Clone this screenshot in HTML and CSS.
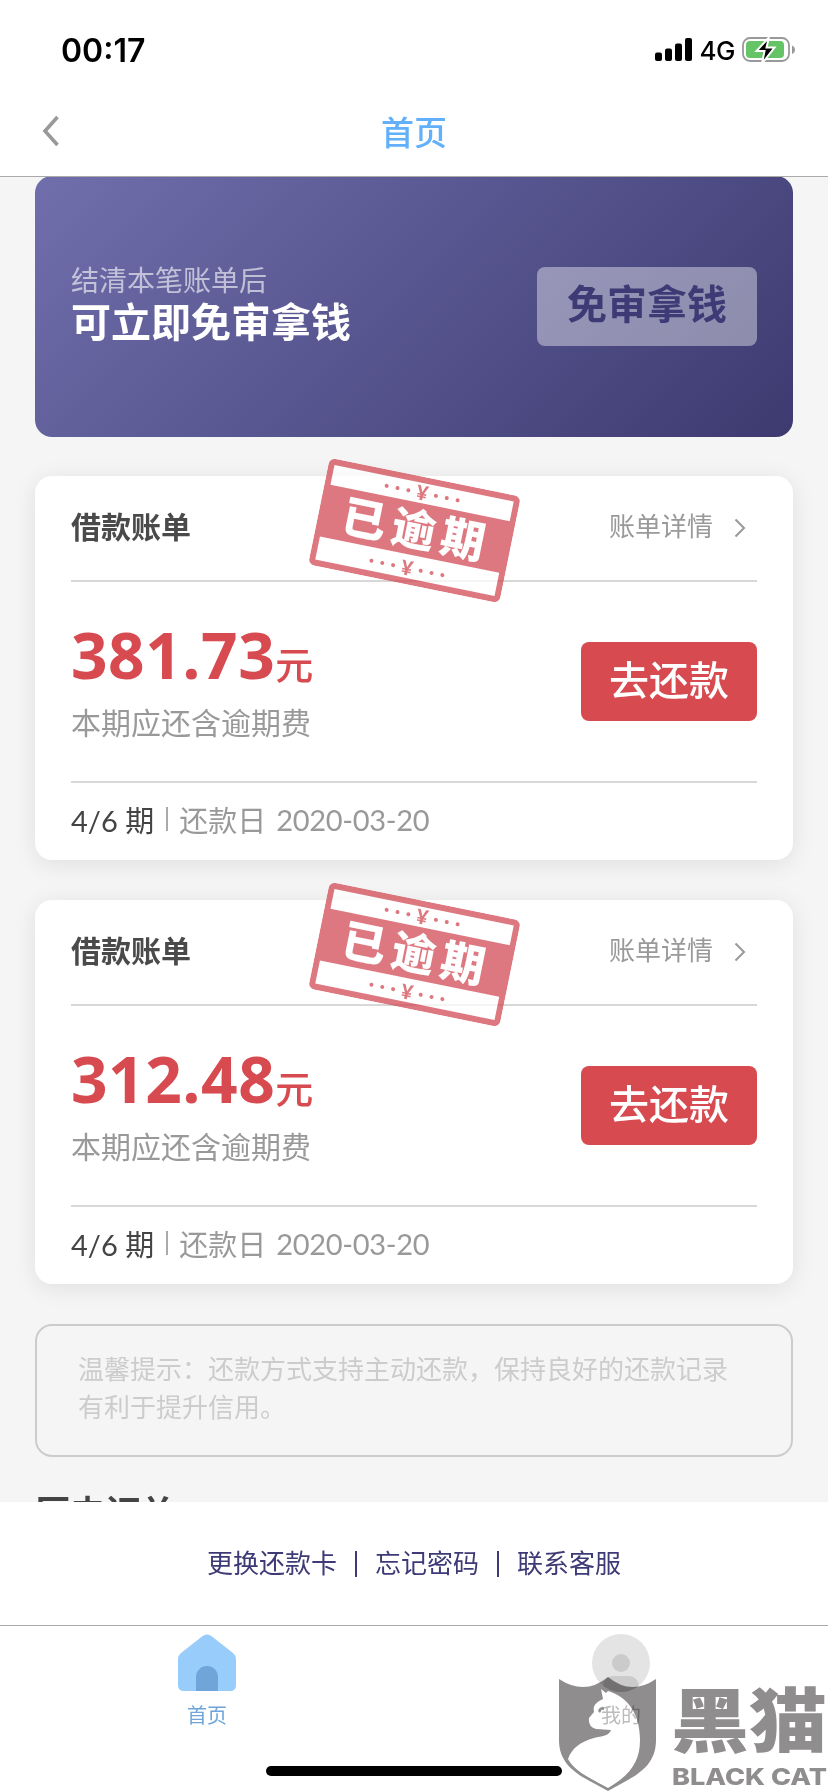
FILE: index.html
```html
<!DOCTYPE html>
<html lang="zh-CN">
<head>
    <meta charset="UTF-8">
    <meta name="viewport" content="width=device-width, initial-scale=1.0">
    <title>首页</title>
    <link rel="stylesheet" href="styles.css">
</head>
<body>
    <div class="status-bar">
        <span class="time">00:17</span>
        <div class="status-right">
            <svg width="38" height="24" viewBox="0 0 38 24">
                <rect x="0" y="14.5" width="7" height="8.5" rx="2"/>
                <rect x="10" y="10.5" width="7" height="12.5" rx="2"/>
                <rect x="20" y="5.5" width="7" height="17.5" rx="2"/>
                <rect x="30" y="0" width="7" height="23" rx="2"/>
            </svg>
            <span class="network">4G</span>
            <svg width="54" height="28" viewBox="0 0 54 28">
                <rect x="1" y="2" width="46" height="23" rx="7" fill="none" stroke="#999" stroke-width="1.800"/>
                <path d="M50 9.500c4 1.500 4 7 0 8.500z" fill="#999"/>
                <rect x="4" y="5" width="38" height="17" rx="4" fill="#65c466"/>
                <path d="M27 1.500L14.500 15h8l-2.500 12.500L32.500 11.500h-8z" fill="#000" stroke="#fff" stroke-width="2"/>
            </svg>
        </div>
    </div>

    <div class="nav-bar">
        <svg class="back" width="18" height="32" viewBox="0 0 18 32"><path d="M15.500 2L3 16l12.500 14" fill="none" stroke="#999" stroke-width="3.600"/></svg>
        <h1>首页</h1>
    </div>

    <div class="content">
        <div class="banner">
            <div class="banner-text">
                <p>结清本笔账单后</p>
                <h2>可立即免审拿钱</h2>
            </div>
            <button class="banner-btn">免审拿钱</button>
        </div>

        <div class="card">
            <svg class="stamp" width="195" height="109" viewBox="0 0 194 108">
                <rect width="194" height="108" rx="6" fill="#d34a54"/>
                <rect x="6" y="6" width="182" height="20" fill="#fff"/>
                <rect x="6" y="78.5" width="182" height="23.5" fill="#fff"/>
                <g fill="#d34a54">
                    <circle cx="61" cy="16" r="2"/><circle cx="72" cy="16" r="2"/><circle cx="83" cy="16" r="2"/>
                    <circle cx="111" cy="16" r="2"/><circle cx="122" cy="16" r="2"/><circle cx="133" cy="16" r="2"/>
                    <circle cx="61" cy="92" r="2"/><circle cx="72" cy="92" r="2"/><circle cx="83" cy="92" r="2"/>
                    <circle cx="111" cy="92" r="2"/><circle cx="122" cy="92" r="2"/><circle cx="133" cy="92" r="2"/>
                </g>
                <g class="stamp-yen" fill="#d34a54">
                    <text x="97" y="23">¥</text>
                    <text x="97" y="99">¥</text>
                </g>
                <g class="stamp-text" fill="#fff">
                    <text x="46" y="69">已</text>
                    <text x="96" y="69">逾</text>
                    <text x="146" y="69">期</text>
                </g>
            </svg>
            <div class="card-head">
                <h3>借款账单</h3>
                <a class="detail">账单详情
                    <svg width="12" height="20" viewBox="0 0 12 20"><path d="M1.500 1.500L10 10l-8.500 8.500" fill="none" stroke="#999" stroke-width="2"/></svg>
                </a>
            </div>
            <div class="card-body">
                <div>
                    <div class="amount">381.73<span>元</span></div>
                    <p class="note">本期应还含逾期费</p>
                </div>
                <button class="pay-btn">去还款</button>
            </div>
            <div class="card-foot">
                <span class="period">4/6 期</span>
                <i></i>
                <span>还款日</span>
                <span class="date">2020-03-20</span>
            </div>
        </div>

        <div class="card">
            <svg class="stamp" width="195" height="109" viewBox="0 0 194 108">
                <rect width="194" height="108" rx="6" fill="#d34a54"/>
                <rect x="6" y="6" width="182" height="20" fill="#fff"/>
                <rect x="6" y="78.5" width="182" height="23.5" fill="#fff"/>
                <g fill="#d34a54">
                    <circle cx="61" cy="16" r="2"/><circle cx="72" cy="16" r="2"/><circle cx="83" cy="16" r="2"/>
                    <circle cx="111" cy="16" r="2"/><circle cx="122" cy="16" r="2"/><circle cx="133" cy="16" r="2"/>
                    <circle cx="61" cy="92" r="2"/><circle cx="72" cy="92" r="2"/><circle cx="83" cy="92" r="2"/>
                    <circle cx="111" cy="92" r="2"/><circle cx="122" cy="92" r="2"/><circle cx="133" cy="92" r="2"/>
                </g>
                <g class="stamp-yen" fill="#d34a54">
                    <text x="97" y="23">¥</text>
                    <text x="97" y="99">¥</text>
                </g>
                <g class="stamp-text" fill="#fff">
                    <text x="46" y="69">已</text>
                    <text x="96" y="69">逾</text>
                    <text x="146" y="69">期</text>
                </g>
            </svg>
            <div class="card-head">
                <h3>借款账单</h3>
                <a class="detail">账单详情
                    <svg width="12" height="20" viewBox="0 0 12 20"><path d="M1.500 1.500L10 10l-8.500 8.500" fill="none" stroke="#999" stroke-width="2"/></svg>
                </a>
            </div>
            <div class="card-body">
                <div>
                    <div class="amount">312.48<span>元</span></div>
                    <p class="note">本期应还含逾期费</p>
                </div>
                <button class="pay-btn">去还款</button>
            </div>
            <div class="card-foot">
                <span class="period">4/6 期</span>
                <i></i>
                <span>还款日</span>
                <span class="date">2020-03-20</span>
            </div>
        </div>

        <div class="tips">温馨提示：还款方式支持主动还款，保持良好的还款记录有利于提升信用。</div>

        <h2 class="history">历史订单</h2>
    </div>

    <div class="links">
        <a>更换还款卡</a>
        <i></i>
        <a>忘记密码</a>
        <i></i>
        <a>联系客服</a>
    </div>

    <div class="tab-bar">
        <div class="tab active">
            <svg width="58" height="58" viewBox="0 0 58 58">
                <path d="M24 2.500q5-4 10 0L55 19q3 2.500 3 6v26q0 6-6 6H6q-6 0-6-6V25q0-3.500 3-6z" fill="#98cdfb"/>
                <path d="M18 57V43a11 11 0 0 1 22 0v14z" fill="#6fa5d8"/>
            </svg>
            <span>首页</span>
        </div>
        <div class="tab">
            <svg width="58" height="58" viewBox="0 0 58 58">
                <clipPath id="round"><circle cx="29" cy="29" r="29"/></clipPath>
                <g clip-path="url(#round)">
                    <rect width="58" height="58" fill="#e4e4e4"/>
                    <circle cx="29" cy="29" r="9" fill="#cbcbcb"/>
                    <rect x="11" y="42" width="36" height="30" rx="10" fill="#cbcbcb"/>
                </g>
            </svg>
            <span>我的</span>
        </div>
    </div>
    <div class="home-indicator"></div>

    <!-- 水印 -->
    <svg class="watermark" width="270" height="116" viewBox="0 0 270 116">
        <path fill="#8f8d8e" fill-rule="evenodd" d="M1 3Q27 20 50 1Q73 20 98 3V64C98 94 72 102 50 115C28 102 1 94 1 64z
            M43 13L45 23C36 27 35 31 36 36L31 42Q30 51 38 53L53 54C51 60 44 60 36 62C22 66 14 72 10 83C17 96 34 103 50 112C74 98 82 84 82 64C82 38 70 21 50 15L48 17z"/>
        <path fill="#8f8d8e" d="M40 35q1-4 5-4l-3 6zM45 30l1 4-2 0z"/>
        <g fill="#8f8d8e">
            <text class="wm-cn" x="113" y="71" textLength="156" lengthAdjust="spacingAndGlyphs">黑猫</text>
            <text class="wm-en" x="114" y="108.500" textLength="155" lengthAdjust="spacingAndGlyphs">BLACK CAT</text>
        </g>
    </svg>
</body>
</html>
```
FILE: styles.css
```css
* {
    box-sizing: border-box;
    margin: 0;
    padding: 0;
}
body {
    position: relative;
    display: flex;
    flex-direction: column;
    width: 828px;
    height: 1792px;
    overflow: hidden;
    background: #fff;
    color: #999;
    font-family: Lato, "Noto Sans CJK SC", sans-serif;
}
h1, h2, h3 {
    font-weight: 500;
}
button {
    border: none;
    border-radius: 8px;
    font-family: "Noto Sans CJK SC", sans-serif;
    font-size: 40px;
    font-weight: 500;
    line-height: 60px;
}

/* 顶部 */
.status-bar {
    display: flex;
    justify-content: space-between;
    align-items: center;
    height: 88px;
    padding: 12px 32px 0 61px;
    color: #000;
    font-family: Inter, sans-serif;
}
.time {
    font-size: 32px;
    font-weight: 600;
}
.status-right {
    display: flex;
    align-items: center;
}
.network {
    margin: 0 7px;
    font-size: 26px;
    font-weight: 500;
    letter-spacing: -0.5px;
}
.nav-bar {
    display: flex;
    align-items: center;
    height: 89px;
    padding: 0 42px 2px;
    border-bottom: 1px solid #aaa;
}
.nav-bar h1 {
    flex: 1;
    margin-right: 18px;
    text-align: center;
    color: #62b0f9;
    font-size: 33px;
}

/* 内容 */
.content {
    flex: none;
    height: 1326px;
    margin-top: -1px;
    padding: 0 35px;
    overflow: hidden;
    background: #f5f5f5;
    border-top: 1px solid #aaa;
}
.banner {
    display: flex;
    justify-content: space-between;
    align-items: center;
    height: 261px;
    margin-top: -1px;
    margin-bottom: 39px;
    padding: 0 36px;
    border-radius: 17px;
    background: linear-gradient(135deg, #706fac, #3d3a70);
}
.banner-text {
    padding-bottom: 10px;
}
.banner p {
    color: rgba(255, 255, 255, 0.6);
    font-size: 28px;
    line-height: 40px;
}
.banner h2 {
    color: #fff;
    font-size: 40px;
    font-weight: 700;
    line-height: 44px;
}
.banner-btn {
    width: 220px;
    height: 79px;
    padding-bottom: 9px;
    background: rgba(255, 255, 255, 0.4);
    color: #3d3a75;
    font-weight: 700;
}
.card {
    position: relative;
    height: 384px;
    margin-bottom: 40px;
    padding: 0 36px;
    border-radius: 17px;
    background: #fff;
    box-shadow: 0 4px 24px rgba(0, 0, 0, 0.09);
}
.stamp {
    position: absolute;
    top: 0;
    left: 282px;
    opacity: 0.74;
    transform: rotate(11.5deg);
}
.stamp-text {
    font-size: 44px;
    font-weight: 900;
    text-anchor: middle;
}
.stamp-yen {
    font-size: 20px;
    font-weight: 900;
    text-anchor: middle;
}
.card-head {
    display: flex;
    justify-content: space-between;
    align-items: center;
    height: 106px;
    padding-bottom: 7px;
    border-bottom: 2px solid #d8d8d8;
}
.card-head h3 {
    color: #4a4a4a;
    font-size: 30px;
    font-weight: 700;
}
.detail {
    display: flex;
    align-items: center;
    gap: 21px;
    padding-right: 11px;
    font-size: 26px;
}
.detail svg {
    margin-top: 6px;
}
.card-body {
    display: flex;
    justify-content: space-between;
    align-items: center;
    height: 201px;
    border-bottom: 2px solid #d8d8d8;
}
.amount {
    color: #d74a50;
    font-family: "Open Sans", "Noto Sans CJK SC", sans-serif;
    font-size: 64px;
    font-weight: 700;
    letter-spacing: 0.5px;
    line-height: 72px;
}
.amount span {
    font-size: 38px;
    font-weight: 500;
}
.note {
    font-size: 30px;
    line-height: 44px;
}
.pay-btn {
    width: 176px;
    height: 79px;
    padding-bottom: 8px;
    background: #d74a50;
    color: #fff;
}
.card-foot {
    display: flex;
    align-items: center;
    height: 75px;
    padding-bottom: 3px;
    font-size: 29px;
}
.period {
    color: #444;
}
.card-foot i {
    width: 2px;
    height: 24px;
    margin: 0 11px 0 12px;
    background: #aaa;
}
.date {
    margin-left: 10px;
    font-weight: 400;
    letter-spacing: -0.3px;
}
.tips {
    height: 133px;
    padding: 24px 60px 0 41px;
    border: 2px solid #ccc;
    border-radius: 17px;
    color: #ccc;
    font-size: 26px;
    line-height: 38px;
}
.history {
    margin-top: 29px;
    color: #444;
    font-size: 35px;
    font-weight: 700;
    line-height: 52px;
}

/* 底部 */
.links {
    display: flex;
    justify-content: center;
    align-items: center;
    gap: 18px;
    height: 123px;
    color: #3d3a75;
    font-size: 26px;
}
.links a {
    padding-bottom: 4px;
}
.links i {
    width: 2px;
    height: 26px;
    background: #3d3a75;
}
.tab-bar {
    display: flex;
    height: 141px;
    border-top: 1px solid #aaa;
}
.tab {
    display: flex;
    flex: 1;
    flex-direction: column;
    align-items: center;
    padding-top: 8px;
    color: #bbb;
    font-size: 20px;
}
.tab span {
    margin-top: 8px;
    line-height: 30px;
}
.tab.active {
    color: #6fa5d8;
}
.home-indicator {
    width: 296px;
    height: 10px;
    margin: 0 auto;
    border-radius: 5px;
    background: #000;
}
.watermark {
    position: absolute;
    right: 0;
    bottom: 0;
    mix-blend-mode: multiply;
}
.wm-cn {
    font-size: 70px;
    font-weight: 900;
}
.wm-en {
    font-family: Inter, sans-serif;
    font-size: 23px;
    font-weight: 800;
}
```
